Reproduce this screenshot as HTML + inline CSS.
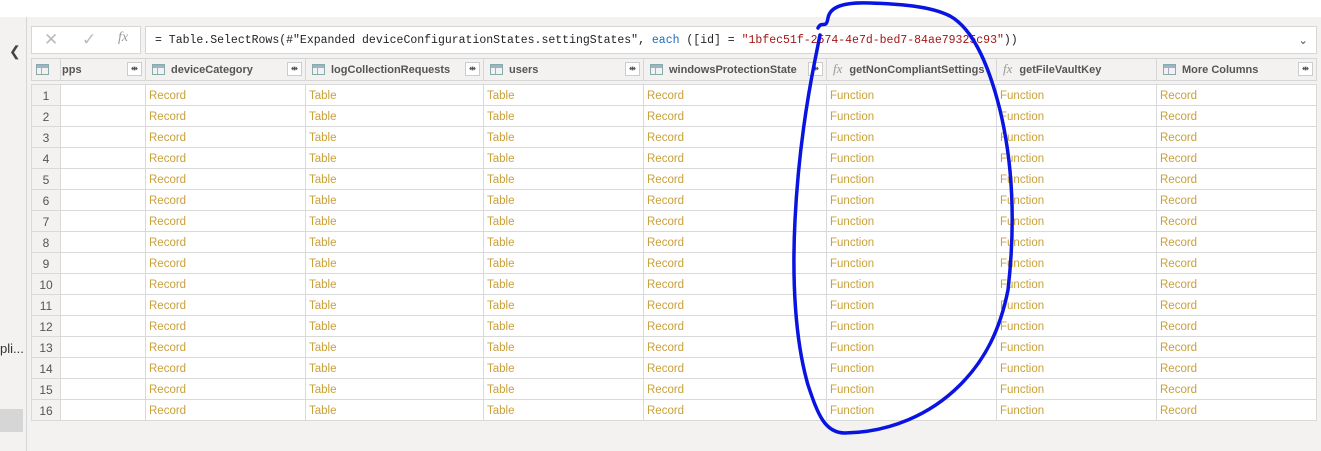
<!DOCTYPE html>
<html><head><meta charset="utf-8"><style>
*{margin:0;padding:0;box-sizing:border-box}
body{width:1321px;height:451px;overflow:hidden;background:#fff;font-family:"Liberation Sans",sans-serif;position:relative}
#bg{position:absolute;left:0;top:17px;width:1321px;height:434px;background:#f3f2f1}
#left{position:absolute;left:0;top:17px;width:27px;height:434px;border-right:1px solid #d6d6d6}
.chev{position:absolute;left:9px;top:26px;font-size:14px;color:#444}
.pli{position:absolute;left:0;top:324px;font-size:13px;color:#333}
.gbox{position:absolute;left:0;top:392px;width:23px;height:23px;background:#d6d6d6}
#fxbox{position:absolute;left:31px;top:26px;width:110px;height:28px;background:#fff;border:1px solid #d6d6d6;color:#bbb;font-size:17px}
#formula{position:absolute;left:145px;top:26px;width:1172px;height:28px;background:#fff;border:1px solid #d6d6d6;font-family:"Liberation Mono",monospace;font-size:11.5px;line-height:28px;padding-left:9px;color:#222;white-space:nowrap}
.kw{color:#1e6bb8}.str{color:#a31515}
#hdr{position:absolute;left:31px;top:58px;height:23px;display:flex;border:1px solid #d6d6d6;background:#f3f2f1}
.h{height:21px;border-right:1px solid #d6d6d6;font-size:11px;font-weight:bold;color:#555;line-height:22px;position:relative;padding-left:6px;white-space:nowrap;overflow:hidden}
.ic{display:inline-block;width:13px;height:11px;border:1px solid #8aa;vertical-align:-2px;margin-right:6px;background:linear-gradient(#9bb3cc,#9bb3cc) 0 0/100% 3px no-repeat,linear-gradient(90deg,transparent 4px,#aab 4px,#aab 5px,transparent 5px)}
.fx{font-family:"Liberation Serif",serif;font-style:italic;font-weight:normal;color:#999;margin-right:7px;font-size:13px;line-height:20px}
.ex{position:absolute;right:3px;top:3px;width:15px;height:14px;border:1px solid #ccc;background:#fff;font-size:8px;line-height:12px;text-align:center;color:#555}
table{position:absolute;left:31px;top:84px;border-collapse:collapse;background:#fff;font-size:11.5px}
td{height:21px;border:1px solid #d9d9d9;color:#c9a13b;padding-left:3px;padding-top:1px;white-space:nowrap}
td.n{background:#f3f2f1;color:#555;text-align:center;padding:1px 0 0;font-size:12px}
</style></head><body>
<div id="bg"></div>
<div id="left"><div class="chev">&#10094;</div><div class="pli">pli...</div><div class="gbox"></div></div>
<div id="fxbox"><span style="position:absolute;left:12px;top:3px">✕</span><span style="position:absolute;left:50px;top:3px">✓</span><span style="position:absolute;left:86px;top:3px;font-family:'Liberation Serif';font-style:italic;font-size:14px;color:#999">fx</span></div>
<div id="formula">= Table.SelectRows(#"Expanded deviceConfigurationStates.settingStates", <span class="kw">each</span> ([id] = <span class="str">"1bfec51f-2574-4e7d-bed7-84ae79325c93"</span>))<span style="position:absolute;right:8px;top:0;color:#555;font-family:'Liberation Sans'">&#8964;</span></div>
<div id="hdr">
<div class="h" style="width:29px;padding-left:4px"><span class="ic" style="margin:0"></span></div>
<div class="h" style="width:85px;padding-left:1px">pps<span class="ex">⇹</span></div>
<div class="h" style="width:160px"><span class="ic"></span>deviceCategory<span class="ex">⇹</span></div>
<div class="h" style="width:178px"><span class="ic"></span>logCollectionRequests<span class="ex">⇹</span></div>
<div class="h" style="width:160px"><span class="ic"></span>users<span class="ex">⇹</span></div>
<div class="h" style="width:183px"><span class="ic"></span>windowsProtectionState<span class="ex">⇹</span></div>
<div class="h" style="width:170px"><span class="fx">fx</span>getNonCompliantSettings</div>
<div class="h" style="width:160px"><span class="fx">fx</span>getFileVaultKey</div>
<div class="h" style="width:159px;border-right:none"><span class="ic"></span>More Columns<span class="ex">⇹</span></div>
</div>
<table>
<colgroup><col style="width:29px"><col style="width:85px"><col style="width:160px"><col style="width:178px"><col style="width:160px"><col style="width:183px"><col style="width:170px"><col style="width:160px"><col style="width:160px"></colgroup>
<tr><td class="n">1</td><td></td><td>Record</td><td>Table</td><td>Table</td><td>Record</td><td>Function</td><td>Function</td><td>Record</td></tr>
<tr><td class="n">2</td><td></td><td>Record</td><td>Table</td><td>Table</td><td>Record</td><td>Function</td><td>Function</td><td>Record</td></tr>
<tr><td class="n">3</td><td></td><td>Record</td><td>Table</td><td>Table</td><td>Record</td><td>Function</td><td>Function</td><td>Record</td></tr>
<tr><td class="n">4</td><td></td><td>Record</td><td>Table</td><td>Table</td><td>Record</td><td>Function</td><td>Function</td><td>Record</td></tr>
<tr><td class="n">5</td><td></td><td>Record</td><td>Table</td><td>Table</td><td>Record</td><td>Function</td><td>Function</td><td>Record</td></tr>
<tr><td class="n">6</td><td></td><td>Record</td><td>Table</td><td>Table</td><td>Record</td><td>Function</td><td>Function</td><td>Record</td></tr>
<tr><td class="n">7</td><td></td><td>Record</td><td>Table</td><td>Table</td><td>Record</td><td>Function</td><td>Function</td><td>Record</td></tr>
<tr><td class="n">8</td><td></td><td>Record</td><td>Table</td><td>Table</td><td>Record</td><td>Function</td><td>Function</td><td>Record</td></tr>
<tr><td class="n">9</td><td></td><td>Record</td><td>Table</td><td>Table</td><td>Record</td><td>Function</td><td>Function</td><td>Record</td></tr>
<tr><td class="n">10</td><td></td><td>Record</td><td>Table</td><td>Table</td><td>Record</td><td>Function</td><td>Function</td><td>Record</td></tr>
<tr><td class="n">11</td><td></td><td>Record</td><td>Table</td><td>Table</td><td>Record</td><td>Function</td><td>Function</td><td>Record</td></tr>
<tr><td class="n">12</td><td></td><td>Record</td><td>Table</td><td>Table</td><td>Record</td><td>Function</td><td>Function</td><td>Record</td></tr>
<tr><td class="n">13</td><td></td><td>Record</td><td>Table</td><td>Table</td><td>Record</td><td>Function</td><td>Function</td><td>Record</td></tr>
<tr><td class="n">14</td><td></td><td>Record</td><td>Table</td><td>Table</td><td>Record</td><td>Function</td><td>Function</td><td>Record</td></tr>
<tr><td class="n">15</td><td></td><td>Record</td><td>Table</td><td>Table</td><td>Record</td><td>Function</td><td>Function</td><td>Record</td></tr>
<tr><td class="n">16</td><td></td><td>Record</td><td>Table</td><td>Table</td><td>Record</td><td>Function</td><td>Function</td><td>Record</td></tr>
</table>
<svg style="position:absolute;left:0;top:0" width="1321" height="451"><path d="M818 28 C822 20 826 30 828 18 C830 6 845 2 870 3 C900 4 930 6 950 16 C975 30 990 70 1000 110 C1012 160 1016 220 1008 290 C1000 330 985 360 960 385 C930 415 890 432 845 433 C825 433 818 415 808 385 C795 340 792 280 795 220 C798 160 805 110 815 60 L820 35" fill="none" stroke="#0a14e0" stroke-width="3.5" stroke-linecap="round"/></svg>
</body></html>
